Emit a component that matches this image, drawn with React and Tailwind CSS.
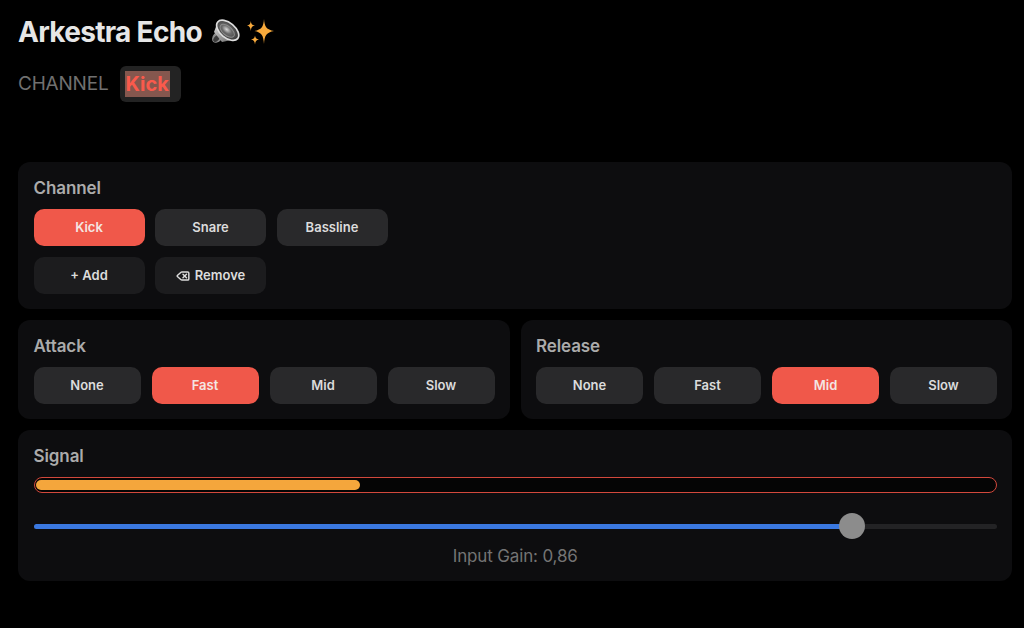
import React from "react";
import { Delete } from "lucide-react";

function Speaker() {
  return (
    <svg width="30" height="30" viewBox="0 0 30 30" className="shrink-0">
      <defs>
        <linearGradient id="cone" x1="0" y1="0" x2="1" y2="1">
          <stop offset="0" stopColor="#e2e2e2" />
          <stop offset="1" stopColor="#5a5a5a" />
        </linearGradient>
        <radialGradient id="inner" cx="0.45" cy="0.5" r="0.6">
          <stop offset="0" stopColor="#d8d8d8" />
          <stop offset="0.35" stopColor="#6c6c6c" />
          <stop offset="1" stopColor="#2e2e2e" />
        </radialGradient>
      </defs>
      <ellipse cx="6.500" cy="20" rx="4.500" ry="6.500" transform="rotate(40 6.500 20)" fill="#8d8d8d" />
      <ellipse cx="5.500" cy="21.500" rx="2.500" ry="4" transform="rotate(40 5.500 21.500)" fill="#3c3c3c" />
      <path d="M6.700 4.900 L3 15 L11 25 L26.700 21.700 Z" fill="url(#cone)" />
      <ellipse cx="16.700" cy="13.300" rx="13" ry="7.500" transform="rotate(40 16.700 13.300)" fill="url(#inner)" stroke="#dedede" strokeWidth="1.700" />
      <ellipse cx="16.200" cy="13.800" rx="8.500" ry="4.500" transform="rotate(40 16.200 13.800)" fill="none" stroke="#8b8b8b" strokeWidth="1" />
    </svg>
  );
}

function Sparkles() {
  return (
    <svg width="28" height="28" viewBox="0 0 28 28" className="shrink-0">
      <path d="M17 1 C17.600 9 19.500 11.500 27 13 C19.500 14.500 17.600 17 17 26 C16.400 17 14.500 14.500 7.500 13 C14.500 11.500 16.400 9 17 1 Z" fill="#f8aa3c" />
      <path d="M3.800 3 C4.200 6 5 7 8 7.500 C5 8 4.200 9.500 3.800 13 C3.400 9.500 2.600 8 0 7.500 C2.600 7 3.400 6 3.800 3 Z" fill="#f8aa3c" />
      <path d="M8 17.500 C8.300 20 9.200 21 12 21.500 C9.200 22 8.300 23.500 8 26.500 C7.700 23.500 6.800 22 4 21.500 C6.800 21 7.700 20 8 17.500 Z" fill="#f8aa3c" />
    </svg>
  );
}

function Card({ title, className = "", children }) {
  return (
    <section className={`rounded-xl bg-[#0d0d0f] ${className}`}>
      <h2 className="text-[17px] leading-[20px] tracking-[-0.1px] font-semibold text-[#ababab]">{title}</h2>
      {children}
    </section>
  );
}

function Btn({ active, dim, wide, children }) {
  const tone = active
    ? "bg-[#f0584a] text-[#f4e6e3]"
    : dim
    ? "bg-[#1c1c1e] text-[#dcdcdc]"
    : "bg-[#29292b] text-[#dcdcdc]";
  return (
    <button
      className={`h-[37px] rounded-[10px] flex items-center justify-center gap-[5px] text-[13px] font-semibold ${wide ? "w-[111px]" : "w-[107px]"} ${tone}`}
    >
      {children}
    </button>
  );
}

function Choice({ title, active }) {
  return (
    <Card title={title} className="flex-1 h-[99px] pt-4 pl-[15.5px]">
      <div className="mt-[11px] flex gap-[11px]">
        {["None", "Fast", "Mid", "Slow"].map((n) => (
          <Btn key={n} active={n === active}>{n}</Btn>
        ))}
      </div>
    </Card>
  );
}

export default function App() {
  return (
    <div className="h-[628px] bg-black pl-[18px] pr-3 overflow-hidden font-['Inter',sans-serif]">
      <header className="h-[162px] pt-[14px]">
        <div className="flex items-center h-[36px]">
          <h1 className="text-[28px] leading-[36px] font-bold text-[#e6e6e6] tracking-[-0.7px]">Arkestra Echo</h1>
          <span className="ml-[9px]"><Speaker /></span>
          <span className="ml-[6px]"><Sparkles /></span>
        </div>
        <div className="mt-[16px] flex items-center gap-[11px]">
          <span className="text-[19px] leading-[36px] tracking-[-0.2px] text-[#707070]">CHANNEL</span>
          <span className="h-[36px] w-[61px] rounded-md bg-[#232323] flex items-center pl-[5px]">
            <span className="bg-[#85574e] h-[26px] px-[1px] text-[20px] leading-[26px] font-bold text-[#fa5a4c]">Kick</span>
          </span>
        </div>
      </header>

      <main className="flex flex-col gap-[11px]">
        <Card title="Channel" className="h-[147px] pt-4 pl-[15.5px] pr-4">
          <div className="mt-[11px] flex gap-[10.5px]">
            <Btn wide active>Kick</Btn>
            <Btn wide>Snare</Btn>
            <Btn wide>Bassline</Btn>
          </div>
          <div className="mt-[11px] flex gap-[10.5px]">
            <Btn wide dim>+ Add</Btn>
            <Btn wide dim><Delete size={14} strokeWidth={2.5} />Remove</Btn>
          </div>
        </Card>

        <div className="flex gap-[11px]">
          <Choice title="Attack" active="Fast" />
          <Choice title="Release" active="Mid" />
        </div>

        <Card title="Signal" className="h-[151px] pt-4 pl-[15.5px] pr-[15px]">
          <div className="mt-[11px] h-4 rounded-full border border-[#d2483c] bg-[#050505] px-[1px] py-[2px]">
            <div className="h-full w-[324px] rounded-full bg-[#f4a63c]" />
          </div>
          <div className="relative mt-[31px] h-[5px] rounded-full bg-[#232325]">
            <div className="h-full w-[817px] rounded-full bg-[#3a78e0]" />
            <div className="absolute left-[805px] top-[-11px] w-[26px] h-[26px] rounded-full bg-[#8c8c8c]" />
          </div>
          <p className="mt-[17px] text-center text-[17px] leading-[20px] tracking-[-0.15px] text-[#747474]">Input Gain: 0,86</p>
        </Card>
      </main>
    </div>
  );
}
